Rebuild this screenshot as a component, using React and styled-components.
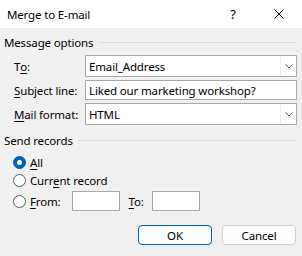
import React from 'react';
import styled, { createGlobalStyle } from 'styled-components';

const Global = createGlobalStyle`
  html, body {
    margin: 0;
    padding: 0;
    background: #f0f0f0;
  }
  body {
    font-family: "Noto Sans", "Open Sans", sans-serif;
    font-size: 11.5px;
    letter-spacing: -0.15px;
    color: #000;
  }
`;

const Dialog = styled.div`
  width: 302px;
  height: 256px;
  display: flex;
  flex-direction: column;
  background: #f0f0f0;
  overflow: hidden;
`;

const TitleBar = styled.div`
  height: 28px;
  background: #fff;
  display: flex;
  align-items: center;
  padding-left: 7px;
`;

const Title = styled.div`
  flex: 1;
`;

const TitleButton = styled.div`
  width: 46px;
  height: 28px;
  display: flex;
  align-items: center;
  justify-content: center;
  font-size: 13px;
`;

const Body = styled.div`
  padding: 0 5px 0 4px;
  display: flex;
  flex-direction: column;
`;

const Legend = styled.div`
  display: flex;
  align-items: center;
  gap: 5px;
  height: 16px;
  margin-top: ${p => p.$top}px;

  &::after {
    content: '';
    flex: 1;
    height: 1px;
    background: #dcdcdc;
  }
`;

const Fields = styled.div`
  display: grid;
  grid-template-columns: 71px 1fr;
  row-gap: 3px;
  padding-left: 10px;
  margin-top: 5px;
`;

const Label = styled.label`
  display: flex;
  align-items: center;
  white-space: nowrap;
`;

const Key = styled.span`
  text-decoration: underline;
  text-underline-offset: 2px;
`;

const Box = styled.div`
  height: ${p => p.$h}px;
  box-sizing: border-box;
  border: 1px solid #a9a9a9;
  background: #fff;
  display: flex;
  align-items: center;
  padding-left: 3px;
`;

const BoxText = styled.span`
  flex: 1;
`;

const DropButton = styled.div`
  width: 16px;
  height: 100%;
  box-sizing: border-box;
  border-left: 1px solid #ececec;
  display: flex;
  align-items: center;
  justify-content: center;
`;

const Radios = styled.div`
  display: flex;
  flex-direction: column;
  padding-left: 9px;
  margin-top: 5px;
`;

const RadioRow = styled.div`
  display: flex;
  align-items: center;
  height: ${p => p.$h || 18}px;
  margin-top: ${p => p.$top || 0}px;
`;

const Radio = styled.span`
  width: 13px;
  height: 13px;
  box-sizing: border-box;
  border-radius: 50%;
  margin-right: 4px;
  border: 1px solid ${p => (p.$on ? '#005fb8' : '#5a5a5a')};
  background: ${p => (p.$on ? '#005fb8' : '#fff')};
  display: flex;
  align-items: center;
  justify-content: center;

  &::after {
    content: '';
    display: ${p => (p.$on ? 'block' : 'none')};
    width: 5px;
    height: 5px;
    border-radius: 50%;
    background: #fff;
  }
`;

const SmallInput = styled.div`
  width: 48px;
  height: 20px;
  box-sizing: border-box;
  border: 1px solid #a9a9a9;
  background: #fff;
  margin-left: ${p => p.$left}px;
`;

const ToLabel = styled.span`
  margin-left: 9px;
`;

const Buttons = styled.div`
  display: flex;
  justify-content: flex-end;
  gap: 10px;
  margin-top: 14px;
  padding-right: 1px;
`;

const Button = styled.div`
  width: 74px;
  height: 20px;
  box-sizing: border-box;
  border-radius: 4px;
  border: 1px solid ${p => (p.$primary ? '#005fb8' : '#d0d0d0')};
  background: #fdfdfd;
  display: flex;
  align-items: center;
  justify-content: center;
`;

const Chevron = () => (
  <svg width="8" height="5" viewBox="0 0 8 5">
    <path d="M0.5 0.5 L4 4 L7.5 0.5" fill="none" stroke="#606060" strokeWidth="1" />
  </svg>
);

const Close = () => (
  <svg width="10" height="10" viewBox="0 0 10 10">
    <path d="M0.5 0.5 L9.5 9.5 M9.5 0.5 L0.5 9.5" stroke="#000" strokeWidth="1" />
  </svg>
);

export default function App() {
  return (
    <>
      <Global />
      <Dialog>
        <TitleBar>
          <Title>Merge to E-mail</Title>
          <TitleButton>?</TitleButton>
          <TitleButton><Close /></TitleButton>
        </TitleBar>
        <Body>
          <Legend $top={6}>Message options</Legend>
          <Fields>
            <Label>T<Key>o</Key>:</Label>
            <Box $h={22}>
              <BoxText>Email_Address</BoxText>
              <DropButton><Chevron /></DropButton>
            </Box>
            <Label><Key>S</Key>ubject line:</Label>
            <Box $h={20}>
              <BoxText>Liked our marketing workshop?</BoxText>
            </Box>
            <Label><Key>M</Key>ail format:</Label>
            <Box $h={22}>
              <BoxText>HTML</BoxText>
              <DropButton><Chevron /></DropButton>
            </Box>
          </Fields>
          <Legend $top={7}>Send records</Legend>
          <Radios>
            <RadioRow>
              <Radio $on />
              <span><Key>A</Key>ll</span>
            </RadioRow>
            <RadioRow>
              <Radio />
              <span>Curr<Key>e</Key>nt record</span>
            </RadioRow>
            <RadioRow $h={20} $top={2}>
              <Radio />
              <span><Key>F</Key>rom:</span>
              <SmallInput $left={11} />
              <ToLabel><Key>T</Key>o:</ToLabel>
              <SmallInput $left={8} />
            </RadioRow>
          </Radios>
          <Buttons>
            <Button $primary>OK</Button>
            <Button>Cancel</Button>
          </Buttons>
        </Body>
      </Dialog>
    </>
  );
}
